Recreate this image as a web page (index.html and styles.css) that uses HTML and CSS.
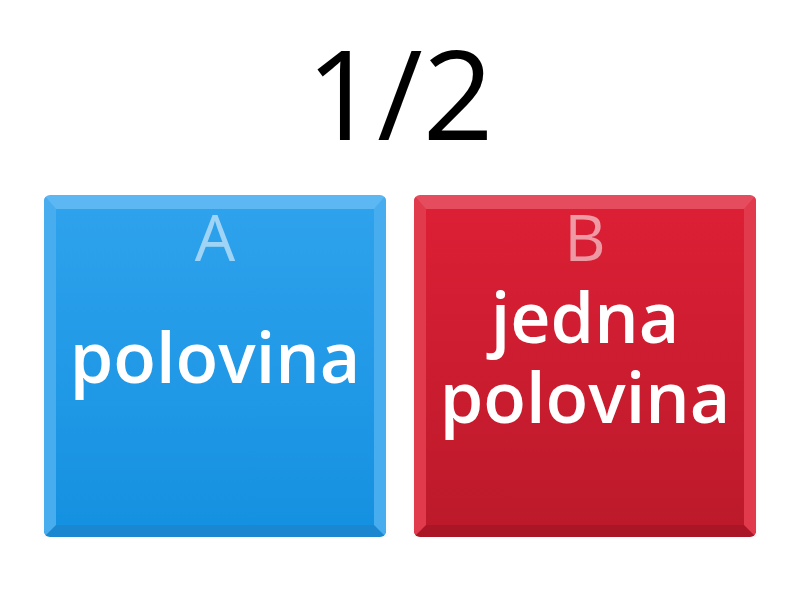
FILE: index.html
```html
<!DOCTYPE html>
<html lang="hr">
<head>
    <meta charset="UTF-8">
    <meta name="viewport" content="width=device-width, initial-scale=1.0">
    <title>1/2</title>
    <link rel="stylesheet" href="styles.css">
</head>
<body>
    <div class="quiz">
        <h1 class="question">1/2</h1>

        <div class="answers">
            <div class="answer blue">
                <span class="letter">A</span>
                <span class="text">polovina</span>
            </div>
            <div class="answer red">
                <span class="letter">B</span>
                <span class="text">jedna<br>polovina</span>
            </div>
        </div>
    </div>
</body>
</html>
```

FILE: styles.css
```css
body {
    margin: 0;
    background: #fff;
    font-family: 'Open Sans', 'Noto Sans', sans-serif;
}
.quiz {
    padding-top: 30px;
}
.question {
    margin: 0;
    font-size: 124px;
    font-weight: 400;
    line-height: 1;
    text-align: center;
    color: #000;
}
.answers {
    display: flex;
    justify-content: center;
    gap: 28px;
    margin-top: 41px;
}
.answer {
    position: relative;
    box-sizing: border-box;
    width: 342px;
    height: 342px;
    border-style: solid;
    border-width: 14px 12px 12px;
    border-radius: 6px;
    display: flex;
    align-items: center;
    justify-content: center;
    text-align: center;
    color: #fff;
    box-shadow: 0 12px 10px -6px rgba(0,0,0,0.18);
}
.blue {
    background: linear-gradient(#2ea2ec, #1591e1);
    border-color: #5cb7f2 #48adee #1b87d0;
}
.red {
    background: linear-gradient(#dc1f35, #bc1a2b);
    border-color: #e54d5e #e03a4c #ab1626;
}
.letter {
    position: absolute;
    top: -4px;
    left: 0;
    right: 0;
    font-size: 64px;
    line-height: 1;
    color: rgba(255,255,255,0.55);
}
.text {
    font-size: 70px;
    font-weight: 600;
    line-height: 80px;
    margin-bottom: 22px;
}
```
